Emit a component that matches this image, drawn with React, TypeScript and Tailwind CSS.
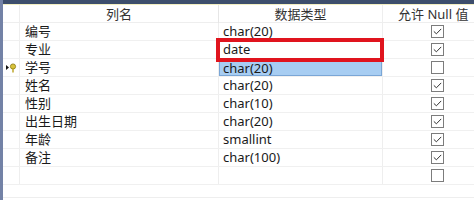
import React from "react";

type Row = { name: string; type: string; nullable: boolean };

const ROWS: Row[] = [
  { name: "编号", type: "char(20)", nullable: true },
  { name: "专业", type: "date", nullable: true },
  { name: "学号", type: "char(20)", nullable: false },
  { name: "姓名", type: "char(20)", nullable: true },
  { name: "性别", type: "char(10)", nullable: true },
  { name: "出生日期", type: "char(20)", nullable: true },
  { name: "年龄", type: "smallint", nullable: true },
  { name: "备注", type: "char(100)", nullable: true },
  { name: "", type: "", nullable: false },
];

const FONT = { fontFamily: '"Noto Sans", "Noto Sans CJK SC", sans-serif' };

function Check({ on }: { on: boolean }) {
  return (
    <span className="flex h-[13px] w-[13px] items-center justify-center border border-[#7c7c7c] bg-white">
      {on && (
        <svg width="9" height="7" viewBox="0 0 9 7">
          <path d="M0.8 3.4 L3.4 5.8 L8.2 0.9" fill="none" stroke="#333" strokeWidth="1" />
        </svg>
      )}
    </span>
  );
}

function KeyMarker() {
  return (
    <svg width="11" height="10" viewBox="0 0 11 10">
      <path d="M0 2 L3 4.5 L0 7 Z" fill="#111" />
      <circle cx="7" cy="3.5" r="2.6" fill="#d8c23a" stroke="#8a7a10" strokeWidth="0.8" />
      <rect x="6.3" y="5.5" width="1.4" height="4" fill="#b9a21e" />
    </svg>
  );
}

export default function App() {
  return (
    <div className="flex h-[200px] w-[474px] overflow-hidden bg-white text-[13px] text-[#1a1a1a]" style={FONT}>
      <div className="w-[3px] shrink-0 bg-[#7382a6]" />
      <div className="flex min-w-0 flex-1 flex-col">
        <div className="h-[4px] bg-[#3d4e6c]" />
        <div className="h-[1px] bg-[#f3efc2]" />
        <div className="grid h-[18px] grid-cols-[17px_199px_164px_1fr] border-b border-[#eeeeee] leading-[18px]">
          <div className="border-r border-[#eeeeee]" />
          <div className="border-r border-[#e6e6e6] text-center text-[#333]">列名</div>
          <div className="border-r border-[#eeeeee] text-center text-[#333]">数据类型</div>
          <div className="pl-[15px] text-[#333]">允许 Null 值</div>
        </div>
        {ROWS.map((r, i) => (
          <div
            key={i}
            className="grid h-[18px] grid-cols-[17px_199px_164px_1fr] border-b border-[#f0f0f0] leading-[17px]"
          >
            <div className="flex items-center justify-center border-r border-[#eeeeee]">
              {i === 2 && <KeyMarker />}
            </div>
            <div className="border-r border-[#eeeeee] pl-[5px]">{r.name}</div>
            <div className={`relative border-r border-[#eeeeee] ${i === 1 ? "z-10" : ""}`}>
              {i === 2 ? (
                <div className="absolute inset-0 border border-[#7aa6d6] bg-[#a7cdf2] pl-[3px]">
                  {r.type}
                </div>
              ) : (
                <div className="pl-[4px]">{r.type}</div>
              )}
              {i === 1 && (
                <div className="absolute -left-[3px] -right-[2px] -top-[3px] -bottom-[4px] border-4 border-[#e0141e]" />
              )}
            </div>
            <div className="flex items-center pl-[48px]">
              <Check on={r.nullable} />
            </div>
          </div>
        ))}
        <div className="flex-1" />
        <div className="h-[3px] border-t border-[#eeeeee]" />
      </div>
    </div>
  );
}
